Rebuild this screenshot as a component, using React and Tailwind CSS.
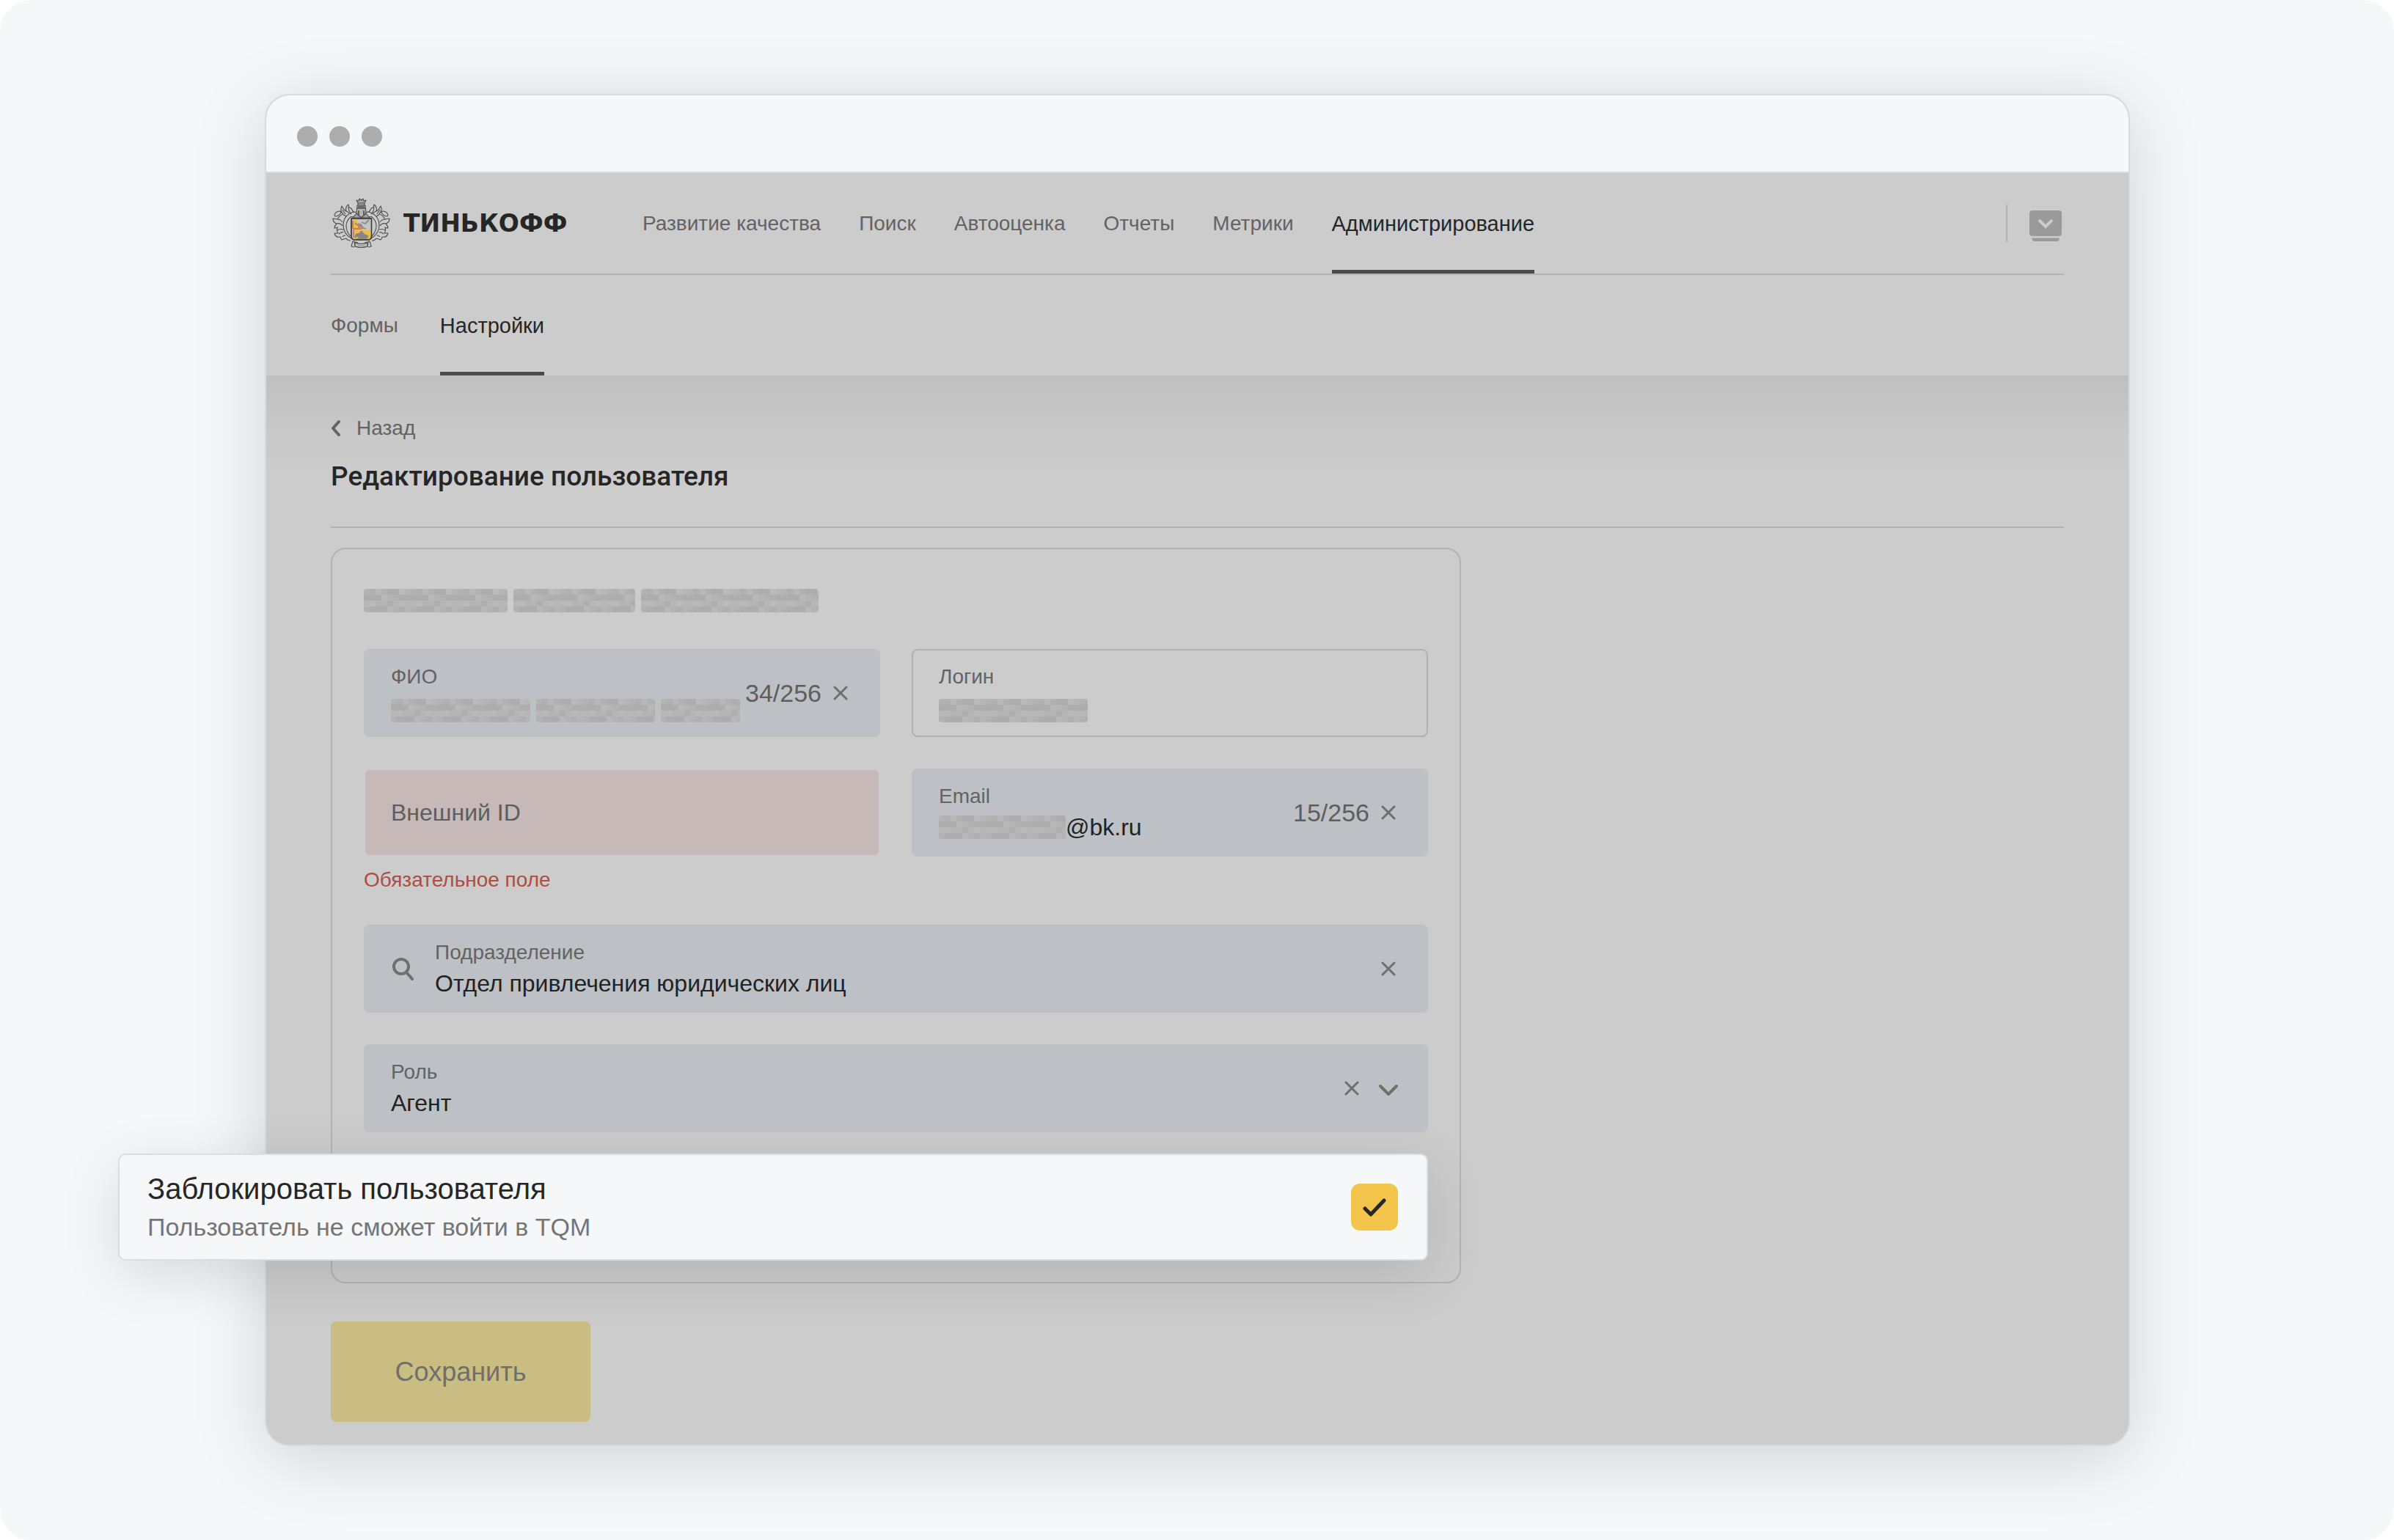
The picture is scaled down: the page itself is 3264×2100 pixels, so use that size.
import { useState } from 'react';

const NAV = ['Развитие качества', 'Поиск', 'Автооценка', 'Отчеты', 'Метрики', 'Администрирование'];
const SUBNAV = ['Формы', 'Настройки'];

// tile of the mosaic that hides personal data, one value per 8px cell
const MOSAIC = [
    ['#b3b3b3', '#b0b0b0', '#b8b8b8', '#b1b1b1', '#adadad', '#adadad', '#bababa', '#b6b6b6'],
    ['#adadad', '#adadad', '#adadad', '#b8b8b8', '#b5b5b5', '#b1b1b1', '#aeaeae', '#aeaeae'],
    ['#b8b8b8', '#b9b9b9', '#b4b4b4', '#b4b4b4', '#aeaeae', '#b6b6b6', '#bababa', '#b7b7b7'],
    ['#b2b2b2', '#adadad', '#adadad', '#adadad', '#b8b8b8', '#b3b3b3', '#afafaf', '#b5b5b5'],
];

const Mosaic = ({ id, className }) => (
    <svg className={`h-8 shrink-0 rounded-sm ${className}`} aria-hidden="true">
        <defs>
            <pattern id={id} width="64" height="32" patternUnits="userSpaceOnUse">
                {MOSAIC.map((row, y) => row.map((fill, x) => (
                    <rect key={`${x}-${y}`} x={x * 8} y={y * 8} width="8" height="8" fill={fill} />
                )))}
            </pattern>
        </defs>
        <rect width="100%" height="100%" fill={`url(#${id})`} />
    </svg>
);

const CrestSide = () => (
    <>
        <path d="M41 27c-3 1-5 0-6-3-1-2-2-3-4-3l-1-4c-3 2-4 5-3 9-2-1-4-3-6-7-2 4-1 8 2 11-3 1-6 3-8 7l-6-1c0 4 2 6 5 7-2 2-3 4-3 6 2 0 3 0 4-1-1 4-1 6 1 8h-5c1 4 4 6 8 5 0 2 1 3 2 4l6-2c1 2 3 3 6 3" />
        <path d="M37 27c-9 3-14 9-14 18 0 8 4 14 11 18" />
        <path d="M34 33c-5 4-7 8-7 13 0 6 2 10 6 14" />
        <path d="M27 26c2 1 3 1 4 3m-8 2c2 0 3 1 4 3m-12 3c3 0 5 1 7 4m-8 2c3-1 6 0 8 3m-7 6c3-2 5-2 8-1m-6 6c2-2 4-3 6-2m-1 6c1-2 2-2 4-2" />
        <path d="M11 31c1-3 4-5 8-5l1 2c-2 3-5 5-8 5z" />
        <path d="M30 20c0 4 1 7 4 10m-12-6 4 6" />
        <path d="M40 33l-6 1m8-4-5 4" />
        <path d="M43 69l-7-2-2 7 4 1m0-7 1 6 5 1" />
    </>
);

const Crest = () => (
    <svg viewBox="8 8 79 69" className="h-[69px] w-[79px]" fill="none" stroke="#4d4d4d" strokeWidth="1.1" strokeLinejoin="round" aria-hidden="true">
        <CrestSide />
        <g transform="matrix(-1 0 0 1 95 0)"><CrestSide /></g>
        {/* crown and helmet */}
        <path d="M41 11l2 4h9l2-4-3 1-1-3-2.500 2-2.500-2-1 3zM43 15v3h9v-3" fill="#a9a9a9" />
        <path d="M42 18h11l1 10-3 6h-7l-3-6z" fill="#b5b5b5" />
        <path d="M42 22h11M43 20h9M44 25v8M51 25v8" strokeWidth="1.600" />
        <path d="M41 29l-5 6h23l-5-6-6.500 6z" fill="#a0a0a0" />
        {/* shield */}
        <path d="M34 36h27.500v24q0 5-5 5H39q-5 0-5-5z" fill="#c4c4c4" />
        <path d="M36 38h6v12h-6z" fill="#e9bd4c" stroke="none" />
        <path d="M36 52h24v12H38l-2-3z" fill="#e9bd4c" stroke="none" />
        <path d="M36 39v11M37 50h11M37 51v11M41 64h14" stroke="#c9663f" strokeWidth="1.400" />
        <path d="M43 37v5l5 2 2 6h-7z" fill="#d98650" stroke="none" />
        <path d="M39 42l5 4 3-2 3 5 4 1M48 41l5 2 5-5" stroke="#8b8b8b" strokeWidth="1.800" />
        <path d="M39 62c0-4 2-6 6-6l3-3 3 4 6 3-2 3H45l-3-3z" fill="#8c8585" stroke="#8c8585" />
        <path d="M34 36h27.500v24q0 5-5 5H39q-5 0-5-5z" stroke="#3a3a3a" strokeWidth="1.500" />
        <path d="M39 69q8.500 3 17 0v5q-8.500 3-17 0z" fill="#bdbdbd" />
        <path d="M43 73h9" stroke="#9a9a9a" />
    </svg>
);

const Icon = ({ d, className, box = '0 0 20 20', width = 3 }) => (
    <svg viewBox={box} className={className} fill="none" stroke="currentColor" strokeWidth={width} strokeLinecap="round" strokeLinejoin="round" aria-hidden="true">
        <path d={d} />
    </svg>
);

const ClearButton = ({ label }) => (
    <button type="button" aria-label={`Очистить поле ${label}`} className="shrink-0 text-[#6f6f6d]">
        <Icon d="M2 2l16 16M18 2L2 18" className="size-5" />
    </button>
);

const Tab = ({ name, active }) => (
    <a
        href="#"
        className={`flex items-center border-y-[5px] border-t-transparent whitespace-nowrap leading-9 ${active ? 'border-b-[#4b4b4b] text-[29px] text-[#262626]' : 'border-b-transparent text-[28px] text-[#636363]'}`}
    >
        {name}
    </a>
);

const Field = ({ id, label, counter, icon, actions, outlined, align = 'items-center', children }) => (
    <div className={`flex items-center rounded-lg border-2 py-[18px] pr-[42px] pl-[35px] ${outlined ? 'border-[#b1b1b1]' : 'border-[#bdc1c6] bg-[#bdc1c6]'}`}>
        {icon}
        <div className="flex min-w-0 flex-1 flex-col gap-1">
            <label htmlFor={id} className="text-[28px] leading-9 text-[#636363]">{label}</label>
            <div className={`flex h-10 ${align}`}>{children}</div>
        </div>
        {counter && <span className="mr-4 text-[34px] leading-10 text-[#5e5e5e]">{counter}</span>}
        {actions}
    </div>
);

const inputStyle = 'h-10 min-w-0 flex-1 bg-transparent text-[32px] leading-10 text-[#222222] outline-none';

export default function App() {
    const [blocked, setBlocked] = useState(true);

    return (
        <div className="bg-white">
            <div className="min-h-screen rounded-[44px] bg-[#f6f7f9] pt-32 pr-[360px] pb-[129px] pl-[361px] font-['Liberation_Sans',Arial,sans-serif]">
                <div className="rounded-[34px] border-2 border-[#d9dadc] bg-[#cccccc] shadow-[0_16px_100px_rgba(0,0,0,0.15)]">
                    {/* window bar */}
                    <div className="flex h-[106px] items-center gap-4 rounded-t-[32px] border-b-2 border-[#d9dadc] bg-[#f6f7f9] px-[42px] pt-2">
                        <span className="size-7 rounded-full bg-[#adadad]" />
                        <span className="size-7 rounded-full bg-[#adadad]" />
                        <span className="size-7 rounded-full bg-[#adadad]" />
                    </div>

                    <header className="px-[88px]">
                        <div className="flex h-[139px] border-b-2 border-[#b3b3b3]">
                            <a href="#" className="flex w-[425px] shrink-0 items-center gap-[18px] pl-0.5">
                                <Crest />
                                <span className="font-['DejaVu_Sans',sans-serif] text-[33px] leading-9 font-bold text-[#262626]">ТИНЬКОФФ</span>
                            </a>
                            <nav className="flex flex-1 gap-[52px]">
                                {NAV.map(name => <Tab key={name} name={name} active={name === 'Администрирование'} />)}
                            </nav>
                            <div className="flex h-[51px] items-center self-center border-l-2 border-[#b3b3b3] pr-[3px] pl-[30px]">
                                <button type="button" aria-label="Меню пользователя" className="mt-1.5">
                                    <svg viewBox="0 0 44 42" className="h-[42px] w-11" aria-hidden="true">
                                        <rect width="44" height="35" rx="4" fill="#9a9a9a" />
                                        <path d="M3 37.500h38q-1 4.500-4 4.500H7q-3 0-4-4.500z" fill="#9a9a9a" />
                                        <path d="M13 13l9 9 9-9" fill="none" stroke="#cccccc" strokeWidth="4" />
                                    </svg>
                                </button>
                            </div>
                        </div>
                        <nav className="flex h-[137px] gap-[57px]">
                            {SUBNAV.map(name => <Tab key={name} name={name} active={name === 'Настройки'} />)}
                        </nav>
                    </header>

                    <main className="rounded-b-[32px] bg-[linear-gradient(#bfbfbf,#c4c4c4_40px,#c9c9c9_80px,#cccccc_130px)] px-[88px] pt-[54px] pb-[31px]">
                        <a href="#" className="flex w-fit items-center text-[28px] leading-9 text-[#636363]">
                            <Icon d="M11 3L3 12l8 9" box="0 0 14 24" width={4} className="mr-[21px] h-6 w-3.5" />
                            Назад
                        </a>
                        <h1 className="mt-6 border-b-2 border-[#b3b3b3] pb-11 font-[Roboto,sans-serif] text-[37px] leading-[48px] font-medium text-[#262626]">
                            Редактирование пользователя
                        </h1>

                        <form onSubmit={e => e.preventDefault()}>
                            <div className="mt-[27px] w-full max-w-[1541px] rounded-[20px] border-2 border-[#b3b3b3] px-[43px] pt-[54px] pb-[29px]">
                                <div className="flex gap-2">
                                    <Mosaic id="head-1" className="w-[196px]" />
                                    <Mosaic id="head-2" className="w-[166px]" />
                                    <Mosaic id="head-3" className="w-[242px]" />
                                </div>

                                <div className="mt-[50px] grid grid-cols-2 gap-x-[43px] gap-y-[43px]">
                                    <Field id="fio" label="ФИО" counter="34/256" align="items-end gap-2" actions={<ClearButton label="ФИО" />}>
                                        <Mosaic id="fio-1" className="w-[190px]" />
                                        <Mosaic id="fio-2" className="w-[162px]" />
                                        <Mosaic id="fio-3" className="w-[108px]" />
                                        <input id="fio" className={inputStyle} />
                                    </Field>
                                    <Field id="login" label="Логин" outlined align="items-end">
                                        <Mosaic id="login-1" className="w-[203px]" />
                                        <input id="login" className={inputStyle} />
                                    </Field>

                                    <div className="flex flex-col gap-3.5">
                                        <div className="flex h-[120px] items-center rounded-lg border-2 border-[#cccccc] bg-[#c7b9b8] bg-clip-padding px-[35px]">
                                            <label htmlFor="external" className="text-[32px] leading-10 text-[#5e5e5e]">Внешний ID</label>
                                            <input id="external" aria-invalid="true" aria-describedby="external-error" className={inputStyle} />
                                        </div>
                                        <p id="external-error" className="text-[28px] leading-9 text-[#b04d41]">Обязательное поле</p>
                                    </div>
                                    <div>
                                        <Field id="email" label="Email" counter="15/256" actions={<ClearButton label="Email" />}>
                                            <Mosaic id="email-1" className="w-[173px]" />
                                            <input id="email" defaultValue="@bk.ru" className={inputStyle} />
                                        </Field>
                                    </div>

                                    <div className="col-span-2">
                                        <Field
                                            id="unit"
                                            label="Подразделение"
                                            icon={<Icon d="M14 3a10 10 0 1 1 0 20a10 10 0 1 1 0-20M22 22l7 8" box="0 0 32 32" width={4} className="mr-7 size-8 text-[#6f6f6d]" />}
                                            actions={<ClearButton label="Подразделение" />}
                                        >
                                            <input id="unit" defaultValue="Отдел привлечения юридических лиц" className={inputStyle} />
                                        </Field>
                                    </div>
                                    <div className="col-span-2">
                                        <Field
                                            id="role"
                                            label="Роль"
                                            actions={
                                                <div className="-mr-1 flex items-center gap-[26px] text-[#6f6f6d]">
                                                    <ClearButton label="Роль" />
                                                    <Icon d="M3 4l11 11L25 4" box="0 0 28 18" width={4} className="mt-1 h-[18px] w-7" />
                                                </div>
                                            }
                                        >
                                            <select id="role" className={`${inputStyle} appearance-none`}>
                                                <option>Агент</option>
                                            </select>
                                        </Field>
                                    </div>
                                </div>

                                {/* highlighted row that sticks out of the window */}
                                <div className="mt-[29px] -ml-[335px] flex h-[146px] items-center justify-between rounded-[10px] border-2 border-[#dcddde] bg-[#f6f7f9] pr-[39px] pl-[38px] shadow-[0_20px_80px_rgba(0,0,0,0.12)]">
                                    <label htmlFor="blocked" className="flex flex-col gap-1.5">
                                        <span className="text-[40px] leading-[48px] text-[#262626]">Заблокировать пользователя</span>
                                        <span className="text-[34px] leading-[44px] text-[#757575]">Пользователь не сможет войти в TQM</span>
                                    </label>
                                    <span className="grid size-16 shrink-0 place-items-center">
                                        <input
                                            id="blocked"
                                            type="checkbox"
                                            checked={blocked}
                                            onChange={e => setBlocked(e.target.checked)}
                                            className="col-start-1 row-start-1 size-16 appearance-none rounded-xl bg-[#d9dadc] checked:bg-[#f3c54b]"
                                        />
                                        {blocked && <Icon d="M3 14l8 8L29 3" box="0 0 32 25" width={5} className="pointer-events-none col-start-1 row-start-1 h-[25px] w-8 text-[#262626]" />}
                                    </span>
                                </div>
                            </div>

                            <button type="submit" className="mt-[52px] h-[137px] w-[354px] rounded-lg bg-[#c9bd82] text-[36px] text-[#6f6f6d]">
                                Сохранить
                            </button>
                        </form>
                    </main>
                </div>
            </div>
        </div>
    );
}
